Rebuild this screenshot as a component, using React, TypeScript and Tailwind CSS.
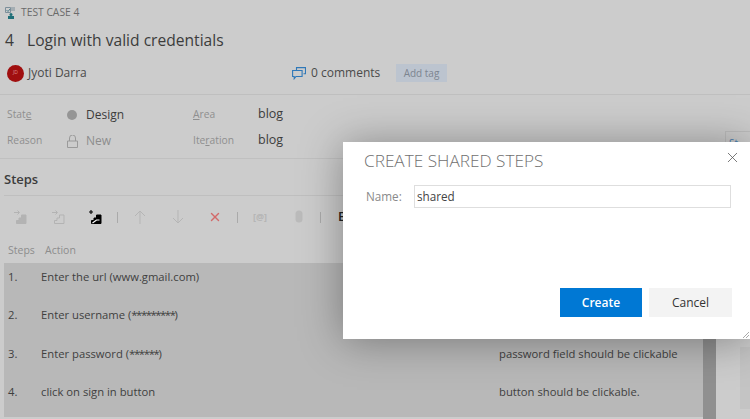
import type { ReactNode } from "react";
import { X } from "lucide-react";

const font = { fontFamily: '"Open Sans", sans-serif' };

function StairIcon({ plus, dark, outline }: { plus?: boolean; dark?: boolean; outline?: boolean }) {
  const c = dark ? "#000000" : "#b3b3b3";
  return (
    <svg width="13" height="14" viewBox="0 0 13 14" className="shrink-0">
      {plus ? (
        <path d="M0 2h4M2 0v4" fill="none" stroke={c} strokeWidth="1.1" />
      ) : (
        <path d="M0 2.5h5M3.5 .5l2 2-2 2" fill="none" stroke={c} strokeWidth="1" />
      )}
      <path d="M2.5 13.5v-3h2.5V8h2.5V5h4.5v8.5z" fill={outline ? "none" : c} stroke={c} strokeWidth="1" />
      {dark && <path d="M3.5 13l4-3h3" fill="none" stroke="#fff" strokeWidth="1.2" />}
    </svg>
  );
}

function Field({ label, value, muted, lock }: { label: ReactNode; value: string; muted?: boolean; lock?: boolean }) {
  return (
    <div className="flex items-center h-[26px]">
      <span className="w-[55px] text-[10.3px] text-[#8f8f8f]">{label}</span>
      <span className="w-[20px] flex justify-center">
        {lock ? (
          <svg width="11" height="13" viewBox="0 0 11 13" fill="none" stroke="#9a9a9a">
            <path d="M.5 6h10v6.5H.5zM2.5 6V3a3 3 0 0 1 6 0v3" />
          </svg>
        ) : (
          <span className="w-[10px] h-[10px] rounded-full bg-[#959595]" />
        )}
      </span>
      <span className={`ml-[4px] text-[12px] ${muted ? "text-[#8c8c8c]" : "text-[#3c3c3c]"}`}>{value}</span>
    </div>
  );
}

function Row({ n, action, expected }: { n: string; action: ReactNode; expected?: string }) {
  return (
    <div className="flex h-[38.3px] pt-[6px] text-[11.25px] text-[#3f3f3f]">
      <span className="w-[37px] pl-[4px] shrink-0">{n}</span>
      <span className="w-[458px] shrink-0">{action}</span>
      <span>{expected}</span>
    </div>
  );
}

export default function App() {
  return (
    <div style={font} className="relative w-[750px] h-[419px] overflow-hidden bg-[#cccccc] text-[#3c3c3c]">
      <div className="flex flex-col h-full">
        <div className="h-[95px] shrink-0 border-b border-[#bfbfbf] pl-[5px] pt-[4px]">
          <div className="flex items-center gap-[5px] h-[17px]">
            <svg width="11" height="12" viewBox="0 0 11 12" fill="none">
              <path d="M.5.5h5v5h-5z" stroke="#7d8f9a" />
              <path d="M1.5 3l1.5 1.5L5 2" stroke="#4f7f8c" />
              <path d="M6 1h4M6 3h4" stroke="#7d8f9a" />
              <path d="M3 12V9h6v3z" fill="#1f6f78" />
              <circle cx="6" cy="7.5" r="1.5" fill="#1f6f78" />
            </svg>
            <span className="text-[10.3px] text-[#6a6a6a]">TEST CASE 4</span>
          </div>
          <div className="flex items-center h-[36px] mt-[2px] -mb-[1px] text-[15.6px] text-[#3c3c3c]">
            <span className="w-[22px]">4</span>
            <span>Login with valid credentials</span>
          </div>
          <div className="flex items-center h-[30px] pl-[2px]">
            <span className="w-[17px] h-[17px] rounded-full bg-[#a00f0f] flex items-center justify-center text-[5px] text-[#d88] shrink-0">JD</span>
            <span className="ml-[4px] w-[264px] text-[12px] text-[#4a4a4a] shrink-0">Jyoti Darra</span>
            <svg width="14" height="13" viewBox="0 0 14 13" fill="none" stroke="#2f78b8" strokeWidth="1.1" className="shrink-0">
              <path d="M4.5 3V.6h9v6.2h-2" />
              <path d="M.6 3.5h9.5v6H4l-1.8 2.2V9.5H.6z" />
            </svg>
            <span className="ml-[5px] w-[85px] text-[12px] text-[#4a4a4a] shrink-0">0 comments</span>
            <span className="h-[18px] w-[51px] bg-[#bcc4cf] text-[10px] text-[#7d8590] flex items-center justify-center shrink-0">Add tag</span>
          </div>
        </div>

        <div className="h-[64px] shrink-0 border-b border-[#c0c0c0] pl-[7px] pt-[7px] flex">
          <div className="w-[186px]">
            <Field label={<>Stat<span className="underline">e</span></>} value="Design" />
            <Field label="Reason" value="New" muted lock />
          </div>
          <div className="w-[200px]">
            <div className="flex items-center h-[26px]">
              <span className="w-[65px] text-[10.3px] text-[#8f8f8f]"><span className="underline">A</span>rea</span>
              <span className="text-[12.5px] text-[#3c3c3c] -mt-[1px]">blog</span>
            </div>
            <div className="flex items-center h-[26px]">
              <span className="w-[65px] text-[10.3px] text-[#8f8f8f]">Ite<span className="underline">r</span>ation</span>
              <span className="text-[12.5px] text-[#3c3c3c] -mt-[1px]">blog</span>
            </div>
          </div>
        </div>

        <div className="flex flex-1 min-h-0">
          <div className="w-[699px] shrink-0 ml-[4px]">
            <div className="h-[37px] border-b border-[#bfbfbf] flex items-center pt-[5px] text-[13px] font-semibold text-[#3c3c3c]">Steps</div>
            <div className="h-[42px] flex items-center pl-[10px]">
              <StairIcon />
              <span className="ml-[25px]"><StairIcon outline /></span>
              <span className="ml-[24px]"><StairIcon plus dark /></span>
              <span className="ml-[15px] h-[11px] w-px bg-[#aaaaaa]" />
              <svg width="12" height="14" viewBox="0 0 12 14" fill="none" stroke="#b5b5b5" className="ml-[16px]"><path d="M6 14V1M1 6l5-5 5 5" /></svg>
              <svg width="12" height="14" viewBox="0 0 12 14" fill="none" stroke="#b5b5b5" className="ml-[26px]"><path d="M6 0v13M1 8l5 5 5-5" /></svg>
              <X size={14} strokeWidth={2.4} className="ml-[24px] text-[#d26a6a]" />
              <span className="ml-[15px] h-[11px] w-px bg-[#aaaaaa]" />
              <span className="ml-[15px] w-[15px] text-[9px] font-bold text-[#b5b5b5]">[@]</span>
              <svg width="8" height="14" viewBox="0 0 8 14" fill="#bbbbbb" className="ml-[27px]"><rect x="0.5" y="0.5" width="7" height="12" rx="3.5" /></svg>
              <span className="ml-[17px] h-[11px] w-px bg-[#aaaaaa]" />
              <span className="ml-[17px] text-[13px] font-semibold text-[#222222]">E</span>
            </div>
            <div className="h-[25px] flex items-center pl-[4px] text-[10.5px] text-[#8c8c8c]">
              <span className="w-[37px]">Steps</span>
              <span>Action</span>
            </div>
            <div className="h-[154px] bg-[#b8b8b8]">
              <Row n="1." action="Enter the url (www.gmail.com)" />
              <Row n="2." action={<>Enter username (<span className="tracking-[-1.4px]">*********</span>)</>} />
              <Row n="3." action={<>Enter password (<span className="tracking-[-1.3px]">******</span>)</>} expected="password field should be clickable" />
              <Row n="4." action="click on sign in button" expected="button should be clickable." />
            </div>
          </div>
          <div className="w-[13px] shrink-0 bg-[#909090]" />
          <div className="flex-1 relative">
            <div className="absolute left-[9px] top-[-28px] right-0 h-[40px] border-l border-t border-[#bdbdbd] pl-[3px] pt-[4px] text-[10px] text-[#4a7fb0]">St</div>
            <div className="absolute left-[24px] right-0 top-[188px] h-[62px] bg-[#c4c4c4]" />
          </div>
        </div>
      </div>

      <div className="absolute left-[343px] top-[142px] w-[407px] h-[197px] bg-white shadow-[0_2px_40px_rgba(0,0,0,0.35)] flex flex-col pl-[21px] pr-[19px]">
        <div className="h-[37px] flex items-center justify-between">
          <span className="text-[17.2px] font-light text-[#707070]">CREATE SHARED STEPS</span>
          <X size={17} strokeWidth={1.1} className="text-[#555555] -mr-[10px] -mt-[6px]" />
        </div>
        <div className="flex items-center h-[23px] mt-[6px]">
          <span className="w-[50px] pl-[2px] pt-[1px] text-[11.7px] text-[#8a8a8a]">Name:</span>
          <div className="flex-1 h-[23px] border border-[#dedede] flex items-center pl-[2px] pt-[1px] text-[11.7px] text-[#444444]">shared</div>
        </div>
        <div className="flex justify-end gap-[7px] mt-[80px] -mr-[1px]">
          <div className="w-[82px] h-[29px] bg-[#0078d4] text-white text-[12px] font-semibold flex items-center justify-center">Create</div>
          <div className="w-[83px] h-[29px] bg-[#f3f3f3] text-[#333333] text-[12px] flex items-center justify-center">Cancel</div>
        </div>
        <svg width="6" height="6" viewBox="0 0 6 6" stroke="#aaaaaa" className="absolute right-[1px] bottom-[1px]"><path d="M0 6l6-6M3 6l3-3" /></svg>
      </div>
    </div>
  );
}
